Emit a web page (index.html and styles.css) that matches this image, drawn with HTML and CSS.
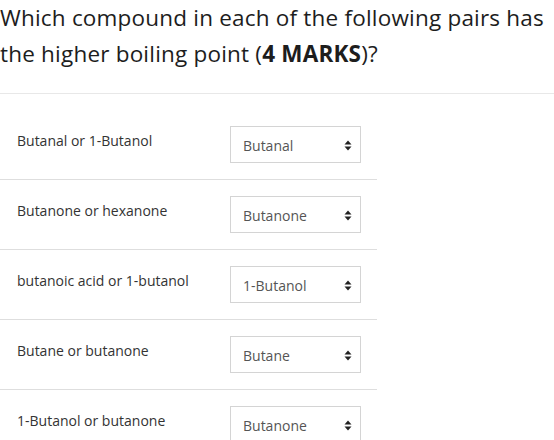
FILE: index.html
```html
<!DOCTYPE html>
<html>
<head>
<meta charset="utf-8">
<link rel="stylesheet" href="styles.css">
</head>
<body>
<div class="page">
  <h1 class="question">Which compound in each of the following pairs has the higher boiling point (<b>4 MARKS</b>)?</h1>
  <div class="rule"></div>
  <div class="rows">
    <div class="row"><span class="label">Butanal or 1-Butanol</span><div class="select"><span class="value">Butanal</span><span class="arrows"><svg width="8" height="11" viewBox="0 0 8 11"><path d="M0.5 4.5 L4 0.5 L7.5 4.5 Z M0.5 6.5 L4 10.5 L7.5 6.5 Z" fill="#222"/></svg></span></div></div>
    <div class="row"><span class="label">Butanone or hexanone</span><div class="select"><span class="value">Butanone</span><span class="arrows"><svg width="8" height="11" viewBox="0 0 8 11"><path d="M0.5 4.5 L4 0.5 L7.5 4.5 Z M0.5 6.5 L4 10.5 L7.5 6.5 Z" fill="#222"/></svg></span></div></div>
    <div class="row"><span class="label">butanoic acid or 1-butanol</span><div class="select"><span class="value">1-Butanol</span><span class="arrows"><svg width="8" height="11" viewBox="0 0 8 11"><path d="M0.5 4.5 L4 0.5 L7.5 4.5 Z M0.5 6.5 L4 10.5 L7.5 6.5 Z" fill="#222"/></svg></span></div></div>
    <div class="row"><span class="label">Butane or butanone</span><div class="select"><span class="value">Butane</span><span class="arrows"><svg width="8" height="11" viewBox="0 0 8 11"><path d="M0.5 4.5 L4 0.5 L7.5 4.5 Z M0.5 6.5 L4 10.5 L7.5 6.5 Z" fill="#222"/></svg></span></div></div>
    <div class="row"><span class="label">1-Butanol or butanone</span><div class="select"><span class="value">Butanone</span><span class="arrows"><svg width="8" height="11" viewBox="0 0 8 11"><path d="M0.5 4.5 L4 0.5 L7.5 4.5 Z M0.5 6.5 L4 10.5 L7.5 6.5 Z" fill="#222"/></svg></span></div></div>
  </div>
</div>
</body>
</html>
```
FILE: styles.css
```css
html, body { margin: 0; padding: 0; background: #fff; }
.page { font-family: "Open Sans", "Noto Sans", sans-serif; color: #222; overflow: hidden; height: 440px; }
.question { margin: 0; font-weight: 400; font-size: 22.5px; line-height: 36px; color: #1d1d1d; padding-top: 0; letter-spacing: 0.2px; width: 550px; }
.question b { font-weight: 700; }
.rule { height: 1px; background: #e8e8e8; margin-top: 21px; }
.rows { width: 377px; padding-top: 16px; }
.row { height: 70px; border-bottom: 1px solid #dedede; display: flex; align-items: center; box-sizing: border-box; }
.label { width: 213px; padding-left: 17px; font-size: 14px; color: #333; margin-top: -8px; }
.select { width: 131px; height: 37px; box-sizing: border-box; border: 1px solid #d4d4d4; display: flex; align-items: center; justify-content: space-between; padding: 1px 8px 0 12px; font-size: 14px; color: #555; }
.arrows { display: flex; align-items: center; }
```
